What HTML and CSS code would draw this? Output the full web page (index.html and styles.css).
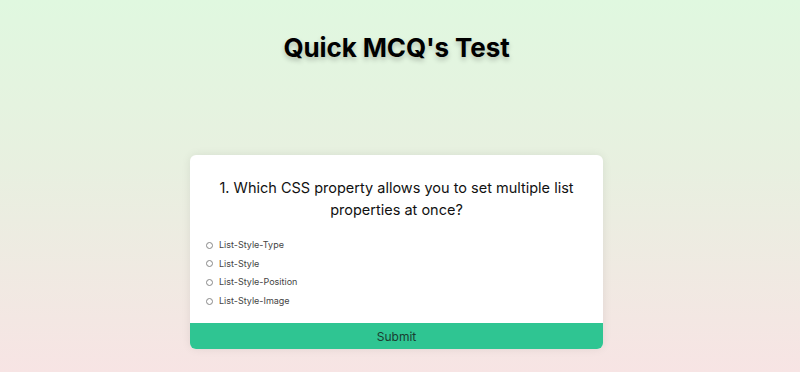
FILE: index.html
```html
<!DOCTYPE html>
<html lang="en">
<head>
<meta charset="utf-8">
<title>Quick MCQ's Test</title>
<link rel="stylesheet" href="styles.css">
</head>
<body>
<main class="page">
  <h1 class="title">Quick MCQ's Test</h1>
  <section class="card">
    <h2 class="question">1. Which CSS property allows you to set multiple list properties at once?</h2>
    <ul class="options">
      <li class="option"><span class="radio"></span><span>List-Style-Type</span></li>
      <li class="option"><span class="radio"></span><span>List-Style</span></li>
      <li class="option"><span class="radio"></span><span>List-Style-Position</span></li>
      <li class="option"><span class="radio"></span><span>List-Style-Image</span></li>
    </ul>
    <button class="submit" type="button">Submit</button>
  </section>
</main>
</body>
</html>
```
FILE: styles.css
```css
* { box-sizing: border-box; }
html, body { height: 100%; }
body {
  margin: 0;
  font-family: "Inter", "Noto Sans", sans-serif;
  background: linear-gradient(to bottom, #e0f8e0 0%, #e8f0e0 45%, #f7e4e4 100%);
}
.page {
  display: flex;
  flex-direction: column;
  align-items: center;
  padding: 31px 7px 0 0;
}
.title {
  margin: 0;
  font-size: 26px;
  font-weight: 700;
  letter-spacing: -0.1px;
  line-height: 34px;
  color: #000;
  text-shadow: 0 3px 5px rgba(0, 0, 0, 0.22);
}
.card {
  margin-top: 90px;
  width: 413px;
  background: #fff;
  border-radius: 6px;
  overflow: hidden;
  box-shadow: 0 0 10px rgba(0, 0, 0, 0.08);
}
.question {
  margin: 0;
  padding: 22px 16px 0;
  text-align: center;
  font-size: 14.5px;
  font-weight: 400;
  line-height: 22px;
  color: #111;
}
.options {
  list-style: none;
  margin: 0;
  padding: 17px 16px 15px;
  display: flex;
  flex-direction: column;
  gap: 4.7px;
}
.option {
  display: flex;
  align-items: center;
  gap: 6px;
  font-size: 9px;
  line-height: 14px;
  color: #444;
}
.radio {
  width: 7px;
  height: 7px;
  border: 1px solid #888;
  border-radius: 50%;
}
.submit {
  display: block;
  width: 100%;
  height: 26px;
  border: 0;
  margin: 0;
  background: #2fc592;
  color: #1a3d30;
  font-family: inherit;
  font-size: 12px;
  cursor: pointer;
}
```
